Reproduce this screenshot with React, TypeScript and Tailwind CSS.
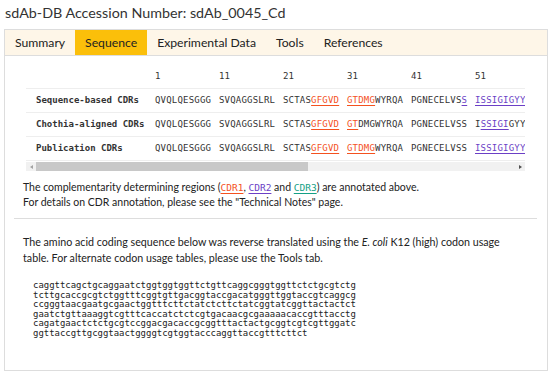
import React from "react";

type Seg = { t: string; c?: "r" | "p" | "g" };

const numbers = [1, 11, 21, 31, 41, 51, 61, 71];

const rows: { label: string; cells: Seg[][] }[] = [
  {
    label: "Sequence-based CDRs",
    cells: [
      [{ t: "QVQLQESGGG" }],
      [{ t: "SVQAGGSLRL" }],
      [{ t: "SCTAS" }, { t: "GFGVD", c: "r" }],
      [{ t: "GTDMG", c: "r" }, { t: "WYRQA" }],
      [{ t: "PGNECELVS" }, { t: "S", c: "p" }],
      [{ t: "ISSIGIGYYS", c: "p" }],
      [{ t: "ESVKG", c: "p" }, { t: "RFTIS" }],
      [{ t: "RDNAKNTVYL" }],
    ],
  },
  {
    label: "Chothia-aligned CDRs",
    cells: [
      [{ t: "QVQLQESGGG" }],
      [{ t: "SVQAGGSLRL" }],
      [{ t: "SCTAS" }, { t: "GFGVD", c: "r" }],
      [{ t: "GT", c: "r" }, { t: "DMGWYRQA" }],
      [{ t: "PGNECELVSS" }],
      [{ t: "I" }, { t: "SSIGI", c: "p" }, { t: "GYYS" }],
      [{ t: "ESVKGRFTIS" }],
      [{ t: "RDNAKNTVYL" }],
    ],
  },
  {
    label: "Publication CDRs",
    cells: [
      [{ t: "QVQLQESGGG" }],
      [{ t: "SVQAGGSLRL" }],
      [{ t: "SCTAS" }, { t: "GFGVD", c: "r" }],
      [{ t: "GTDMG", c: "r" }, { t: "WYRQA" }],
      [{ t: "PGNECELVSS" }],
      [{ t: "ISSIGIGYYS", c: "p" }],
      [{ t: "ESVKGRFTIS" }],
      [{ t: "RDNAKNTVYL" }],
    ],
  },
];

const dna = [
  "caggttcagctgcaggaatctggtggtggttctgttcaggcgggtggttctctgcgtctg",
  "tcttgcaccgcgtctggtttcggtgttgacggtaccgacatgggttggtaccgtcaggcg",
  "ccgggtaacgaatgcgaactggtttcttctatctcttctatcggtatcggttactactct",
  "gaatctgttaaaggtcgtttcaccatctctcgtgacaacgcgaaaaacaccgtttacctg",
  "cagatgaactctctgcgtccggacgacaccgcggtttactactgcggtcgtcgttggatc",
  "ggttaccgttgcggtaactggggtcgtggtacccaggttaccgtttcttct",
];

const tabs = ["Summary", "Sequence", "Experimental Data", "Tools", "References"];

const segClass = (c?: string) => {
  if (c === "r") return "text-[#f4511e] underline underline-offset-2";
  if (c === "p") return "text-[#6b3fc6] underline underline-offset-2";
  if (c === "g") return "text-[#14a085] underline underline-offset-2";
  return "";
};

const cdrLink = "font-['DejaVu_Sans_Mono',monospace] text-[9.5px]";

export default function App() {
  return (
    <div className="w-[554px] h-[376px] bg-white text-[#222] font-['Lato',sans-serif] overflow-hidden">
      <div className="h-[29px] pl-[5px] pt-[3px] text-[14.3px] leading-[20px] text-[#333]">
        sdAb-DB Accession Number: sdAb_0045_Cd
      </div>

      <div className="ml-[4px] mr-[6px] border border-[#ddd] h-[342px]">
        <div className="flex h-[26px] bg-[#fef6e8] border-b border-[#ddd]">
          {tabs.map((t) => (
            <div
              key={t}
              className={
                "px-[10px] text-[12.2px] leading-[25px] " +
                (t === "Sequence" ? "bg-[#fbbf0a]" : "")
              }
            >
              {t}
            </div>
          ))}
        </div>

        <div className="pt-[9px]">
          <div className="ml-[21px] w-[499px] overflow-hidden font-['DejaVu_Sans_Mono',monospace] text-[9px] text-[#333]">
            <div className="flex h-[24px] items-center whitespace-nowrap border-b border-[#eee]">
              <div className="w-[129px] shrink-0" />
              {numbers.map((n) => (
                <div key={n} className="w-[64px] shrink-0">
                  {n}
                </div>
              ))}
            </div>
            {rows.map((r) => (
              <div
                key={r.label}
                className="flex h-[24px] items-center whitespace-nowrap border-b border-[#eee]"
              >
                <div className="w-[129px] shrink-0 pl-[10px] font-bold">{r.label}</div>
                {r.cells.map((cell, i) => (
                  <div key={i} className="w-[64px] shrink-0 tracking-[0.2px]">
                    {cell.map((s, j) => (
                      <span key={j} className={segClass(s.c)}>
                        {s.t}
                      </span>
                    ))}
                  </div>
                ))}
              </div>
            ))}
          </div>

          {/* fake horizontal scrollbar */}
          <div className="ml-[21px] w-[499px] mt-[1px] h-[9px] bg-[#f1f1f1] flex items-center">
            <div className="w-[10px] flex justify-center">
              <div className="w-0 h-0 border-y-[2px] border-y-transparent border-r-[3px] border-r-[#a3a3a3]" />
            </div>
            <div className="w-[272px] h-[9px] bg-[#c8c8c8]" />
            <div className="flex-1" />
            <div className="w-[10px] flex justify-center">
              <div className="w-0 h-0 border-y-[2px] border-y-transparent border-l-[3px] border-l-[#505050]" />
            </div>
          </div>

          <div className="ml-[18px] mt-[9px] text-[10.5px] leading-[15px] text-[#222]">
            <p>
              The complementarity determining regions (
              <span className={cdrLink + " " + segClass("r")}>CDR1</span>,{" "}
              <span className={cdrLink + " " + segClass("p")}>CDR2</span> and{" "}
              <span className={cdrLink + " " + segClass("g")}>CDR3</span>) are annotated above.
            </p>
            <p>For details on CDR annotation, please see the "Technical Notes" page.</p>
          </div>

          <div className="ml-[9px] mr-[10px] mt-[8px] border-t border-[#ddd]" />

          <div className="ml-[18px] w-[490px] mt-[15px] text-[10.7px] leading-[16px] text-[#222]">
            <p>
              The amino acid coding sequence below was reverse translated using the <i>E. coli</i> K12
              (high) codon usage table. For alternate codon usage tables, please use the Tools tab.
            </p>
          </div>

          <div className="ml-[28px] mt-[15px] font-['DejaVu_Sans_Mono',monospace] text-[8.95px] leading-[9.6px] text-[#222]">
            {dna.map((l) => (
              <div key={l}>{l}</div>
            ))}
          </div>
        </div>
      </div>
    </div>
  );
}
